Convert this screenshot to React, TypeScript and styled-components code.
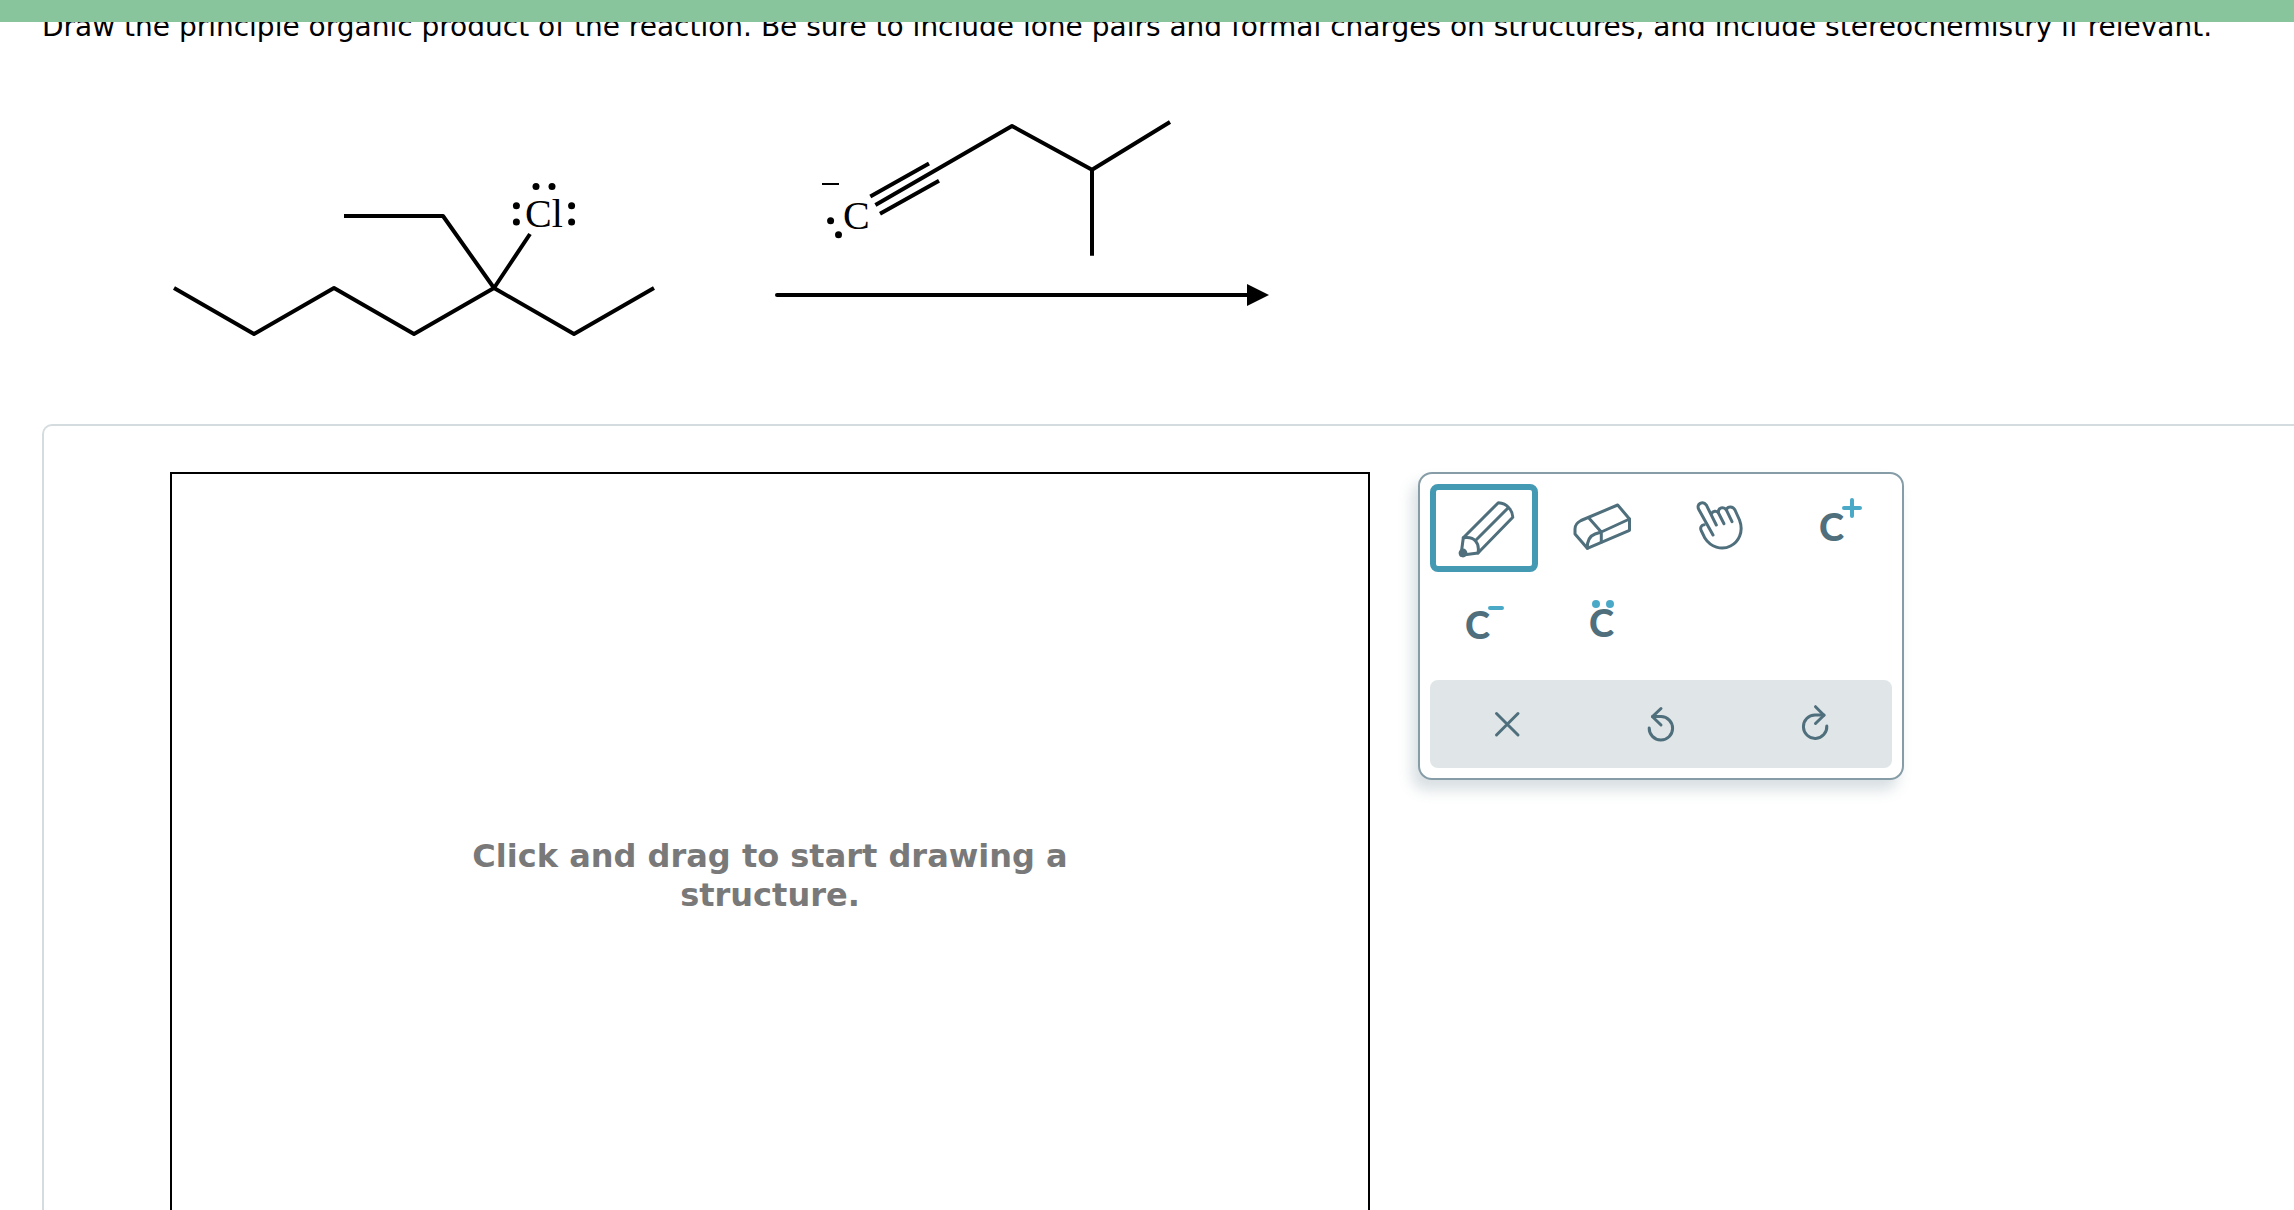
import React, { useState } from "react";
import styled, { createGlobalStyle } from "styled-components";

const ink = "#4f6f7c";
const accent = "#4ba9c8";

const GlobalStyle = createGlobalStyle`
  * { box-sizing: border-box; }
  body {
    margin: 0;
    background: #fff;
    color: #000;
    font-family: Verdana, "DejaVu Sans", sans-serif;
  }
`;

const Page = styled.div`
  height: 100vh;
  overflow: hidden;
`;

const TopBar = styled.header`
  position: fixed;
  inset: 0 0 auto 0;
  height: 22px;
  background: #88c59c;
`;

const Main = styled.main`
  padding: 8px 0 0 42px;
`;

const Prompt = styled.p`
  margin: 0;
  font-size: 28px;
  line-height: 38px;
`;

const Reaction = styled.figure`
  margin: 54px 0 74px;
`;

const ReactionDrawing = styled.svg`
  display: block;
  width: 1260px;
  max-width: 100%;
  fill: none;
  stroke: #000;
  stroke-width: 4px;
  stroke-linejoin: round;
`;

const AtomLabel = styled.text`
  font-family: "Liberation Serif", "Times New Roman", serif;
  font-size: 40px;
  fill: #000;
  stroke: none;
`;

const FormalCharge = styled.path`
  stroke-width: 2px;
`;

const LonePairDot = styled.circle`
  fill: #000;
  stroke: none;
`;

const Panel = styled.section`
  display: flex;
  align-items: flex-start;
  gap: 48px;
  padding: 46px 40px 46px 126px;
  border: 2px solid #d5dcdf;
  border-right: 0;
  border-radius: 10px 0 0 10px;
`;

const Canvas = styled.div`
  display: flex;
  flex: 0 1 1200px;
  min-height: 808px;
  align-items: center;
  justify-content: center;
  border: 2px solid #000;
`;

const CanvasHint = styled.p`
  max-width: 600px;
  margin: 0;
  color: #797979;
  font-size: 32px;
  font-weight: 700;
  line-height: 39px;
  text-align: center;
`;

const Toolbox = styled.div`
  display: grid;
  flex: none;
  gap: 10px;
  padding: 10px;
  background: #fff;
  border: 2px solid #869da8;
  border-radius: 14px;
  box-shadow: -6px 10px 14px rgba(79, 111, 124, 0.22);
`;

const ToolGrid = styled.div`
  display: grid;
  grid-template-columns: repeat(4, 108px);
  gap: 10px;
`;

const ActionBar = styled.div`
  display: grid;
  grid-template-columns: repeat(3, 1fr);
  background: #e0e6e8;
  border-radius: 8px;
`;

const ToolButton = styled.button<{ $selected?: boolean }>`
  display: flex;
  height: 88px;
  padding: 0;
  align-items: center;
  justify-content: center;
  background: transparent;
  border: 6px solid ${(p) => (p.$selected ? "#4499b3" : "transparent")};
  border-radius: 8px;
  cursor: pointer;
`;

const Icon = styled.svg.attrs({ viewBox: "0 0 60 60", "aria-hidden": true })`
  width: 60px;
  height: 60px;
  flex: none;
  overflow: visible;
  fill: none;
  stroke: ${ink};
  stroke-width: 3px;
  stroke-linecap: round;
  stroke-linejoin: round;
`;

const PencilLead = styled.circle`
  fill: ${ink};
  stroke: none;
`;

const CarbonLetter = styled.text`
  font-family: Lato, sans-serif;
  font-size: 38px;
  font-weight: 900;
  fill: ${ink};
  stroke: none;
`;

const Charge = styled.path`
  stroke: ${accent};
  stroke-width: 4px;
`;

const ElectronDot = styled.circle`
  fill: ${accent};
  stroke: none;
`;

const PencilIcon = () => (
  <Icon>
    <path d="M9.3 39.7 44.3 4.7Q51 5 54.7 9.7Q58.5 13.5 58.8 19.3L24 55 7 57.3Z" />
    <path d="M9.3 39.7Q18 38.5 21.3 42.7Q25.5 47 24 55M21.3 42.7 54.3 9.7" />
    <PencilLead cx="9" cy="55" r="4.4" />
  </Icon>
);

const EraserIcon = () => (
  <Icon>
    <path d="M45.7 7 9 22.5Q3 25.5 3 31V36L15.3 50.3 57.5 32.3V21Z" />
    <path d="M17.3 20.5 29.3 34V44M29.3 34 57.5 21M15.3 50.3Q15 39 23 36L29.3 34" />
  </Icon>
);

const HandIcon = () => (
  <Icon>
    <path d="M23 37 8.8 11.5C5.8 5.8 13 2.2 16.4 7.2L26.3 27" />
    <path d="M21.7 15.3C22.5 13.4 26.5 11.8 28.6 15.2L34 25.7" />
    <path d="M28.4 14.4C28 9.5 33.6 8.2 36.2 11.6L42 23.7" />
    <path d="M36.2 11.6C38 8.2 42.8 8 45 12L49.5 22C54 34 48.5 44 40.5 48C31.5 52.5 20.5 49 15 40.3L11.4 33C9.6 29.5 11.6 26.8 14.2 26.8" />
  </Icon>
);

const PlusChargeIcon = () => (
  <Icon>
    <CarbonLetter x="11" y="43">C</CarbonLetter>
    <Charge d="M36 10H52M44 2V18" />
  </Icon>
);

const MinusChargeIcon = () => (
  <Icon>
    <CarbonLetter x="11" y="43">C</CarbonLetter>
    <Charge d="M36 12H48" />
  </Icon>
);

const LonePairIcon = () => (
  <Icon>
    <CarbonLetter x="17" y="41">C</CarbonLetter>
    <ElectronDot cx="24" cy="8" r="4" />
    <ElectronDot cx="38" cy="8" r="4" />
  </Icon>
);

const ClearIcon = () => (
  <Icon>
    <path d="M19.5 19.5 41 41M41 19.5 19.5 41" />
  </Icon>
);

const UndoIcon = () => (
  <Icon>
    <path d="M18.2 34A11.7 11.7 0 1 0 30 22.6H21.5" />
    <path d="M30 14.5 21.5 22.7 30 31" />
  </Icon>
);

const RedoIcon = () => (
  <Icon>
    <path d="M41.8 32A11.7 11.7 0 1 1 30 21H39" />
    <path d="M30.5 12.7 39 21.2 30.5 29.5" />
  </Icon>
);

const tools = [
  { name: "Draw", icon: <PencilIcon /> },
  { name: "Erase", icon: <EraserIcon /> },
  { name: "Move", icon: <HandIcon /> },
  { name: "Add positive charge", icon: <PlusChargeIcon /> },
  { name: "Add negative charge", icon: <MinusChargeIcon /> },
  { name: "Add lone pair", icon: <LonePairIcon /> },
];

const actions = [
  { name: "Clear", icon: <ClearIcon /> },
  { name: "Undo", icon: <UndoIcon /> },
  { name: "Redo", icon: <RedoIcon /> },
];

const lonePairs = [
  [536, 186.4],
  [552, 186.4],
  [516.4, 205.8],
  [516.4, 222],
  [571.6, 205.8],
  [571.6, 222],
  [830.6, 220.7],
  [838.5, 234.8],
];

export default function App() {
  const [selected, setSelected] = useState("Draw");

  return (
    <Page>
      <GlobalStyle />
      <Main>
        <Prompt>
          Draw the principle organic product of the reaction. Be sure to include lone pairs and
          formal charges on structures, and include stereochemistry if relevant.
        </Prompt>

        <Reaction>
          <ReactionDrawing viewBox="42 100 1260 250" role="img" aria-label="Reaction scheme">
            <path d="M174 288 254 334 334 288 414 334 494 288 574 334 654 288" />
            <path d="M344 216H443L494 288 530 234" />
            <AtomLabel x="525" y="227">Cl</AtomLabel>
            <path d="M875.4 205 1012 126 1092 169.7 1170 122M1092 169.7V255.7" />
            <path d="M870.3 196.4 929 163.4M880 213.8 939 180.8" />
            <FormalCharge d="M822 184H839" />
            <AtomLabel x="843" y="229">C</AtomLabel>
            {lonePairs.map(([x, y]) => (
              <LonePairDot key={`${x}-${y}`} cx={x} cy={y} r="3.5" />
            ))}
            <path d="M777 295H1248" strokeLinecap="round" />
            <path d="M1247 284 1269 295 1247 306Z" fill="#000" stroke="none" />
          </ReactionDrawing>
        </Reaction>

        <Panel>
          <Canvas>
            <CanvasHint>Click and drag to start drawing a structure.</CanvasHint>
          </Canvas>
          <Toolbox>
            <ToolGrid>
              {tools.map((tool) => (
                <ToolButton
                  key={tool.name}
                  type="button"
                  aria-label={tool.name}
                  aria-pressed={selected === tool.name}
                  $selected={selected === tool.name}
                  onClick={() => setSelected(tool.name)}
                >
                  {tool.icon}
                </ToolButton>
              ))}
            </ToolGrid>
            <ActionBar>
              {actions.map((action) => (
                <ToolButton key={action.name} type="button" aria-label={action.name}>
                  {action.icon}
                </ToolButton>
              ))}
            </ActionBar>
          </Toolbox>
        </Panel>
      </Main>
      <TopBar />
    </Page>
  );
}
